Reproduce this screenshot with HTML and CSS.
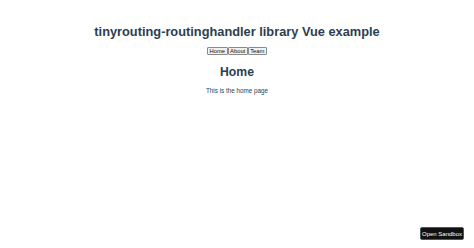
FILE: index.html
```html
<!DOCTYPE html>
<html>
<head>
<meta charset="utf-8">
<link rel="stylesheet" href="styles.css">
</head>
<body>
<div class="app">
  <h1 class="title">tinyrouting-routinghandler library Vue example</h1>
  <nav class="nav">
    <button class="navbtn">Home</button><button class="navbtn">About</button><button class="navbtn">Team</button>
  </nav>
  <h2 class="page-title">Home</h2>
  <p class="page-text">This is the home page</p>
</div>
<button class="sandbox">Open Sandbox</button>
</body>
</html>
```
FILE: styles.css
```css
html, body { margin: 0; padding: 0; background: #fff; }
body { height: 248px; font-family: "Liberation Sans", Arial, sans-serif; color: #2c3e50; }
.app { display: flex; flex-direction: column; align-items: center; padding-top: 24px; }
.title { margin: 0; font-size: 12.8px; font-weight: bold; line-height: 15px; }
.nav { display: flex; margin-top: 8px; }
.navbtn { font-family: "Liberation Sans", Arial, sans-serif; font-size: 5.8px; padding: 0 1.5px; margin: 0; border: 1px solid #8a8a8a; border-radius: 1px; background: #f0f0f0; color: #111; line-height: 6px; height: 8px; }
.page-title { margin: 10px 0 0; font-size: 12.2px; font-weight: bold; line-height: 14px; }
.page-text { margin: 8px 0 0; font-size: 6.3px; line-height: 8px; }
.sandbox { position: fixed; right: 10px; bottom: 8px; background: #111; color: #fff; border: 1px solid #555; border-radius: 2px; font-family: "Liberation Sans", Arial, sans-serif; font-size: 6px; padding: 0; line-height: 6px; height: 13px; width: 44px; white-space: nowrap; text-align: center; }
```
